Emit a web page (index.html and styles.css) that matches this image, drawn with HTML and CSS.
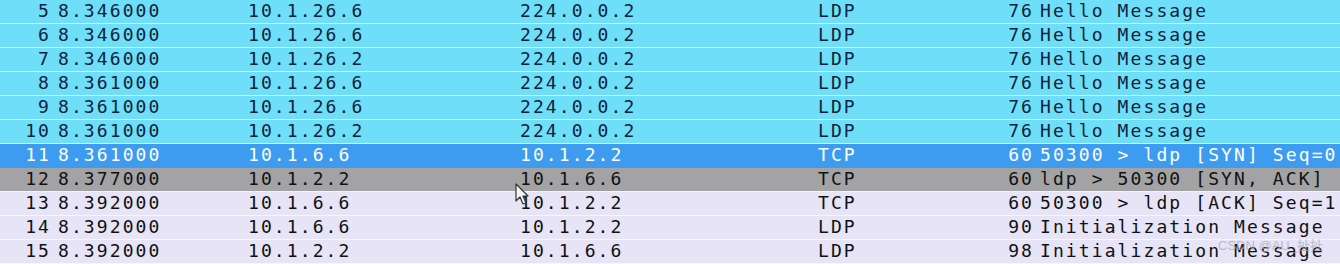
FILE: index.html
```html
<!DOCTYPE html>
<html lang="en">
<head>
<meta charset="utf-8">
<title>Packet list</title>
<link rel="stylesheet" href="styles.css">
</head>
<body>
<div class="packet-list">
  <div class="row ldp"><span class="c-no">5</span><span class="c-time">8.346000</span><span class="c-src">10.1.26.6</span><span class="c-dst">224.0.0.2</span><span class="c-proto">LDP</span><span class="c-len">76</span><span class="c-info">Hello Message</span></div>
  <div class="row ldp"><span class="c-no">6</span><span class="c-time">8.346000</span><span class="c-src">10.1.26.6</span><span class="c-dst">224.0.0.2</span><span class="c-proto">LDP</span><span class="c-len">76</span><span class="c-info">Hello Message</span></div>
  <div class="row ldp"><span class="c-no">7</span><span class="c-time">8.346000</span><span class="c-src">10.1.26.2</span><span class="c-dst">224.0.0.2</span><span class="c-proto">LDP</span><span class="c-len">76</span><span class="c-info">Hello Message</span></div>
  <div class="row ldp"><span class="c-no">8</span><span class="c-time">8.361000</span><span class="c-src">10.1.26.6</span><span class="c-dst">224.0.0.2</span><span class="c-proto">LDP</span><span class="c-len">76</span><span class="c-info">Hello Message</span></div>
  <div class="row ldp"><span class="c-no">9</span><span class="c-time">8.361000</span><span class="c-src">10.1.26.6</span><span class="c-dst">224.0.0.2</span><span class="c-proto">LDP</span><span class="c-len">76</span><span class="c-info">Hello Message</span></div>
  <div class="row ldp"><span class="c-no">10</span><span class="c-time">8.361000</span><span class="c-src">10.1.26.2</span><span class="c-dst">224.0.0.2</span><span class="c-proto">LDP</span><span class="c-len">76</span><span class="c-info">Hello Message</span></div>
  <div class="row selected"><span class="c-no">11</span><span class="c-time">8.361000</span><span class="c-src">10.1.6.6</span><span class="c-dst">10.1.2.2</span><span class="c-proto">TCP</span><span class="c-len">60</span><span class="c-info">50300 &gt; ldp [SYN] Seq=0 Win=65535 Len=0 MSS=1460</span></div>
  <div class="row marked"><span class="c-no">12</span><span class="c-time">8.377000</span><span class="c-src">10.1.2.2</span><span class="c-dst">10.1.6.6</span><span class="c-proto">TCP</span><span class="c-len">60</span><span class="c-info">ldp &gt; 50300 [SYN, ACK]  Seq=0 Ack=1 Win=8192 Len=0</span></div>
  <div class="row tcp"><span class="c-no">13</span><span class="c-time">8.392000</span><span class="c-src">10.1.6.6</span><span class="c-dst">10.1.2.2</span><span class="c-proto">TCP</span><span class="c-len">60</span><span class="c-info">50300 &gt; ldp [ACK] Seq=1 Ack=1 Win=65535 Len=0</span></div>
  <div class="row tcp"><span class="c-no">14</span><span class="c-time">8.392000</span><span class="c-src">10.1.6.6</span><span class="c-dst">10.1.2.2</span><span class="c-proto">LDP</span><span class="c-len">90</span><span class="c-info">Initialization Message</span></div>
  <div class="row tcp"><span class="c-no">15</span><span class="c-time">8.392000</span><span class="c-src">10.1.2.2</span><span class="c-dst">10.1.6.6</span><span class="c-proto">LDP</span><span class="c-len">98</span><span class="c-info">Initialization Message</span></div>
  <svg class="cursor" width="16" height="24" viewBox="0 0 16 24" aria-hidden="true"><path d="M1 1 L1 18 L5 14 L8 21 L11 20 L8 13 L13 13 Z" fill="#f4f4f4" stroke="#333" stroke-width="1.2" stroke-linejoin="round"/></svg>
  <div class="watermark">CSDN @AU_扯扯</div>
</div>
</body>
</html>
```
FILE: styles.css
```css
html, body {
  margin: 0;
  padding: 0;
  background: #e6e4f6;
  overflow: hidden;
}

.packet-list {
  position: relative;
  width: 1340px;
  height: 264px;
  overflow: hidden;
  font-family: "DejaVu Sans Mono", "Liberation Mono", monospace;
  font-size: 18px;
  letter-spacing: 2.1px;
}

.row {
  display: flex;
  height: 22px;
  line-height: 22px;
  padding-bottom: 1px;
  border-bottom: 1px solid #eaf9ff;
  white-space: pre;
}

.row span {
  display: block;
  flex: none;
  overflow: hidden;
}

.c-no { width: 51px; padding-right: 7px; text-align: right; }
.c-time { width: 190px; }
.c-src { width: 272px; }
.c-dst { width: 298px; }
.c-proto { width: 143px; }
.c-len { width: 73px; padding-right: 6px; text-align: right; }
.c-info { flex: 1 1 auto; min-width: 0; }

.ldp {
  background: #6fdef9;
  color: #10233a;
}

.selected {
  background: #3d9cf0;
  color: #ffffff;
  border-bottom-color: #3d9cf0;
}

.marked {
  background: #a3a3a5;
  color: #111111;
  border-bottom-color: #f2f2fa;
}

.tcp {
  background: #e6e4f6;
  color: #111111;
  border-bottom-color: #f6f6fd;
}

.cursor {
  position: absolute;
  left: 515px;
  top: 183px;
}

.watermark {
  position: absolute;
  left: 1218px;
  top: 235px;
  font-family: "Liberation Sans", "Noto Sans CJK SC", sans-serif;
  font-size: 13px;
  letter-spacing: 0;
  color: rgba(170, 170, 185, 0.75);
}
```
